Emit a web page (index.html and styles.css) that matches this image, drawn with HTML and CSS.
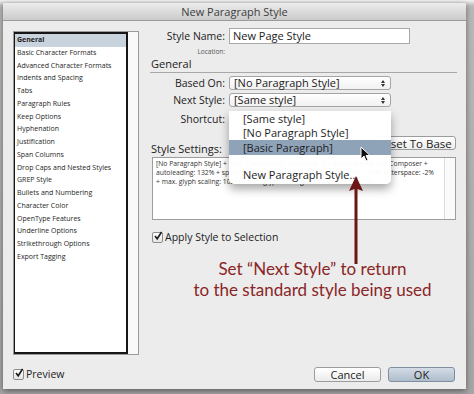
FILE: index.html
```html
<!DOCTYPE html>
<html lang="en">
<head>
  <meta charset="UTF-8"/>
  <meta name="viewport" content="width=device-width,initial-scale=1"/>
  <title>New Paragraph Style</title>
  <link rel="stylesheet" href="styles.css">
</head>
<body>

  <div class="window">
    <div class="titlebar">New Paragraph Style</div>

    <div class="window-body">
      <div class="main">
        <!-- left category list -->
        <div class="listbox">
          <ul class="list">
            <li class="selected">General</li>
            <li>Basic Character Formats</li>
            <li>Advanced Character Formats</li>
            <li>Indents and Spacing</li>
            <li>Tabs</li>
            <li>Paragraph Rules</li>
            <li>Keep Options</li>
            <li>Hyphenation</li>
            <li>Justification</li>
            <li>Span Columns</li>
            <li>Drop Caps and Nested Styles</li>
            <li>GREP Style</li>
            <li>Bullets and Numbering</li>
            <li>Character Color</li>
            <li>OpenType Features</li>
            <li>Underline Options</li>
            <li>Strikethrough Options</li>
            <li>Export Tagging</li>
          </ul>
          <div class="scrollbar"></div>
        </div>

        <!-- right settings panel -->
        <div class="panel">
          <div class="row row-name">
            <label class="lbl">Style Name:</label>
            <div class="textfield">New Page Style</div>
          </div>
          <div class="row row-location">
            <span class="lbl small">Location:</span>
          </div>

          <div class="section-title">General</div>

          <div class="row row-select">
            <label class="lbl">Based On:</label>
            <div class="select">[No Paragraph Style]<span class="arrows"></span></div>
          </div>
          <div class="row row-select">
            <label class="lbl">Next Style:</label>
            <div class="select">[Same style]<span class="arrows"></span></div>
          </div>
          <div class="row row-shortcut">
            <label class="lbl">Shortcut:</label>
          </div>

          <div class="settings-head">
            <span class="settings-label">Style Settings:</span>
            <button class="btn btn-reset">Reset To Base</button>
          </div>
          <div class="settings-box">
            <p>[No Paragraph Style] + next: [Same style] + tracking: 0 + Adobe Paragraph Composer +<br>
            autoleading: 132% + space before: 0p0 + min. word spacing: 85% + min. letterspace: -2%<br>
            + max. glyph scaling: 102% + min. glyph scaling: 98% + desired: 100%</p>
            <div class="settings-scroll"></div>
          </div>

          <div class="check-row">
            <span class="checkbox"><svg viewBox="0 0 10 10" width="10" height="10"><path d="M2 5 L4.2 7.8 L8.6 1" fill="none" stroke="#1d1d1d" stroke-width="1.6"/></svg></span>
            <span>Apply Style to Selection</span>
          </div>

          <div class="note">
            Set &ldquo;Next Style&rdquo; to return<br>
            to the standard style being used
          </div>

          <!-- dropdown opened from Next Style -->
          <ul class="menu">
            <li>[Same style]</li>
            <li>[No Paragraph Style]</li>
            <li class="hl">[Basic Paragraph]</li>
            <li class="sep"></li>
            <li>New Paragraph Style...</li>
          </ul>

          <svg class="arrow" width="18" height="88" viewBox="0 0 18 88">
            <path d="M9 0 L16 15 L10.5 13 L10.5 88 L7.5 88 L7.5 13 L2 15 Z" fill="#6e1515"/>
          </svg>
          <svg class="cursor" width="11" height="16" viewBox="0 0 11 16">
            <path d="M1 1 L1 13 L4 10 L6 15 L8 14 L6 9.5 L10 9.5 Z" fill="#111" stroke="#fff" stroke-width="1"/>
          </svg>
        </div>
      </div>

      <div class="footer">
        <div class="check-row preview">
          <span class="checkbox"><svg viewBox="0 0 10 10" width="10" height="10"><path d="M2 5 L4.2 7.8 L8.6 1" fill="none" stroke="#1d1d1d" stroke-width="1.6"/></svg></span>
          <span>Preview</span>
        </div>
        <div class="buttons">
          <button class="btn">Cancel</button>
          <button class="btn btn-ok">OK</button>
        </div>
      </div>
    </div>
  </div>

</body>
</html>
```

FILE: styles.css
```css
html, body { margin:0; padding:0; }
body {
  width:474px; height:394px; overflow:hidden;
  background:linear-gradient(#f4f4f4 0, #b9b9b9 6px, #a6a6a6 100%);
  font-family:"Open Sans", "Liberation Sans", sans-serif; color:#222;
}
.window {
  margin:3px 0 0 3px; width:463px; height:386px;
  background:#ececec; box-shadow:0 2px 6px rgba(0,0,0,0.45);
  display:flex; flex-direction:column;
}
.titlebar {
  height:17px; line-height:17px; text-align:center; font-size:11px; color:#3c3c3c;
  background:linear-gradient(#ececec, #cbcbcb); border-bottom:1px solid #9a9a9a;
}
.window-body { padding:10px 10px 0 10px; display:flex; flex-direction:column; flex:1; }
.main { display:flex; gap:12px; }

/* category list */
.listbox { width:126px; height:324px; display:flex; border:1px solid #9a9a9a; box-sizing:border-box; background:#fff; }
.list {
  list-style:none; margin:0; padding:0; flex:1;
  border:2px solid #161616; border-left-width:1.5px; background:#fff;
}
.list li { height:12.75px; line-height:12.75px; font-size:7px; padding-left:2px; color:#1e1e1e; white-space:nowrap; }
.list li.selected { background:#c9d3dd; font-weight:700; }
.scrollbar { width:10px; background:#f9f9f9; }

/* right panel */
.panel { position:relative; width:305px; margin-top:-3px; }
.row { display:flex; align-items:center; }
.lbl { width:74px; text-align:right; margin-right:4px; font-size:10.5px; color:#222; white-space:nowrap; }
.lbl.small { font-size:6.5px; color:#555; margin-right:0; }
.row-name { height:16px; }
.textfield {
  width:181px; height:16px; box-sizing:border-box; background:#fff;
  border:1px solid #a9a9a9; font-size:11px; line-height:14px; padding-left:3px;
}
.row-location { height:10px; margin-top:2px; }
.section-title {
  font-size:11px; height:15px; line-height:14px; margin:1px 0 0 0;
  border-bottom:1px solid #a8a8a8; width:306px; margin-left:-1px; padding-left:1px;
}
.row-select { height:14px; margin-top:3px; }
.row-select:first-of-type { margin-top:11px; }
.select {
  position:relative; width:162px; height:14px; box-sizing:border-box;
  background:linear-gradient(#ffffff, #f1f1f1); border:1px solid #a4a4a4; border-radius:3px;
  font-size:11px; line-height:12px; padding-left:4px; white-space:nowrap;
}
.arrows { position:absolute; right:5px; top:3px; width:4px; height:7px; }
.arrows::before, .arrows::after {
  content:""; position:absolute; left:0; border-left:2px solid transparent; border-right:2px solid transparent;
}
.arrows::before { top:0; border-bottom:3px solid #333; }
.arrows::after { bottom:0; border-top:3px solid #333; }
.row-shortcut { height:14px; margin-top:5px; }

.settings-head { display:flex; justify-content:space-between; align-items:flex-end; margin-top:10px; height:19px; }
.settings-label { font-size:11px; line-height:12px; }
.btn {
  font-family:inherit; font-size:11px; color:#222; padding:0; height:15px; line-height:13px;
  background:linear-gradient(#ffffff, #ececec); border:1px solid #9c9c9c; border-radius:3px;
}
.btn-reset { width:83px; height:14px; margin-bottom:5px; font-size:11.5px; }
.settings-box {
  position:relative; margin-top:2px; width:304px; height:63px; box-sizing:border-box;
  background:#fff; border:1px solid #9d9d9d; margin-left:1px;
}
.settings-box p { margin:0; padding:1px 12px 0 3px; font-size:6.8px; line-height:9px; color:#333; white-space:nowrap; overflow:hidden; }
.settings-scroll { position:absolute; right:0; top:0; bottom:0; width:10px; border-left:1px solid #ddd; background:#fafafa; }

.check-row { display:flex; align-items:center; font-size:10.5px; gap:2px; }
.panel .check-row { margin-top:10px; margin-left:1px; }
.checkbox {
  width:9px; height:9px; border:1px solid #8d8d8d; border-radius:2px; background:linear-gradient(#fff,#e4e4e4);
  position:relative; display:inline-block;
}
.checkbox svg { position:absolute; left:0; top:-2px; }

.note {
  margin-top:14px; padding-left:18px; text-align:center;
  font-family:"Lato", "Open Sans", sans-serif; font-size:17px; line-height:21px; color:#8a2626;
}

/* open popup menu */
.menu {
  position:absolute; left:78px; top:83px; width:162px; margin:0; padding:1px 0 2px 0; list-style:none;
  background:rgba(255,255,255,0.97); border-radius:0 0 5px 5px;
  box-shadow:0 5px 10px rgba(0,0,0,0.35);
}
.menu li { height:14px; line-height:14px; font-size:11px; padding-left:14px; color:#1e1e1e; }
.menu li.hl { background:#8fa3b8; height:15px; line-height:15px; }
.menu li.sep { height:13px; }

.arrow { position:absolute; left:196px; top:148px; }
.cursor { position:absolute; left:209px; top:118px; }

/* bottom */
.footer { display:flex; justify-content:space-between; align-items:center; margin-top:12px; }
.preview { font-size:10.5px; margin-top:-1px; }
.buttons { display:flex; gap:7px; margin-right:1px; }
.buttons .btn { width:67px; }
.btn-ok { background:linear-gradient(#d4dde7, #aebccb); border-color:#7f8fa0; }
```
